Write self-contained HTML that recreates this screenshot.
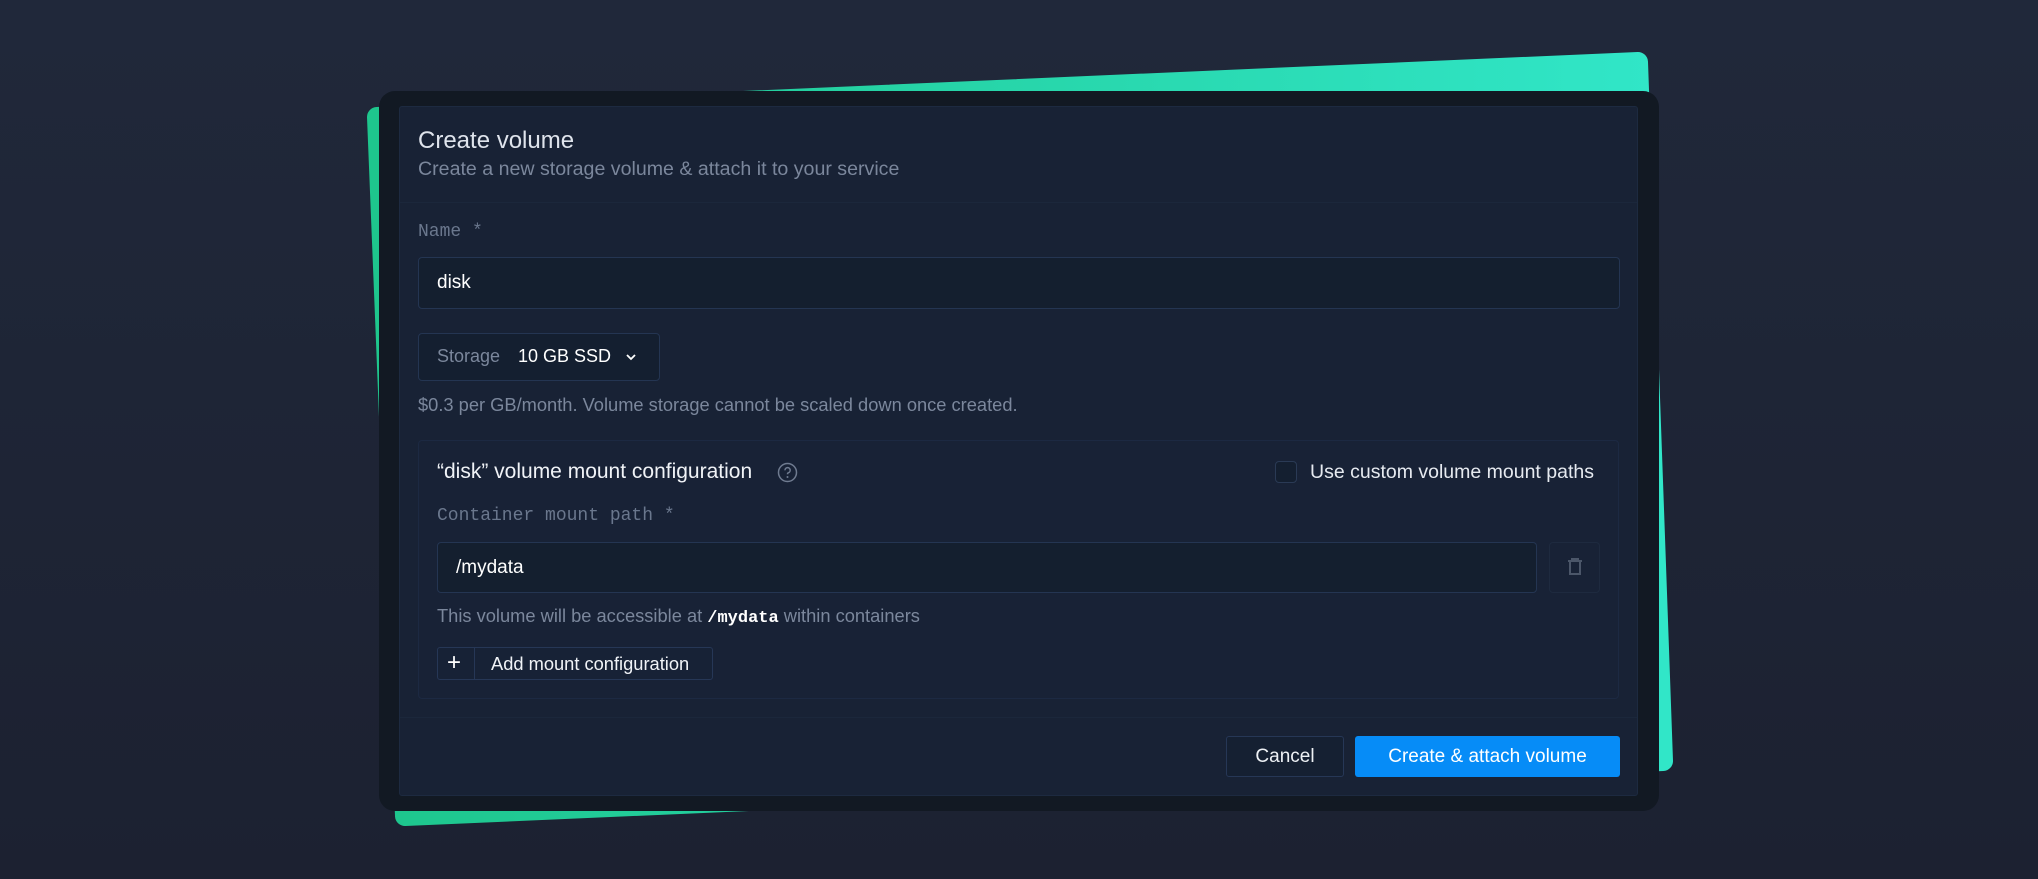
<!DOCTYPE html>
<html><head><meta charset="utf-8"><style>
*{box-sizing:border-box;margin:0;padding:0}
body{width:2038px;height:879px;overflow:hidden;background:linear-gradient(180deg,#20283a 0%,#1c2131 100%);font-family:"Liberation Sans",sans-serif;position:relative}
.abs{position:absolute}
.frame{left:379px;top:91px;width:1280px;height:720px;background:#121923;border-radius:16px}
.panel{left:399px;top:106px;width:1239px;height:690px;background:#182235;border:1px solid #1d2a40;border-radius:3px}
.t{position:absolute;white-space:nowrap}
.mono{font-family:"Liberation Mono",monospace;color:#6a778d;font-size:18px}
.inp{position:absolute;background:#141f2f;border:1.5px solid #243552;border-radius:4px}
</style></head><body>
<svg class="abs" style="left:0;top:0" width="2038" height="879">
<defs><linearGradient id="g" x1="0" y1="0" x2="1" y2="0"><stop offset="0" stop-color="#1ec68d"/><stop offset="1" stop-color="#31e6c8"/></linearGradient></defs>
<polygon points="377,117 1638,62 1663,761 405,816" fill="url(#g)" stroke="url(#g)" stroke-width="20" stroke-linejoin="round"/>
</svg>
<div class="abs frame"></div>
<div class="abs panel"></div>
<div class="abs" style="left:400px;top:202px;width:1237px;height:1px;background:#1b273b"></div>
<div class="abs" style="left:400px;top:717px;width:1237px;height:1px;background:#1b273b"></div>
<div class="t" style="left:418px;top:127px;font-size:24px;color:#dfe4ec">Create volume</div>
<div class="t" style="left:418px;top:158px;font-size:19.6px;color:#7b879c">Create a new storage volume &amp; attach it to your service</div>
<div class="t mono" style="left:418px;top:222px">Name *</div>
<div class="inp" style="left:418px;top:257px;width:1202px;height:52px"></div>
<div class="t" style="left:437px;top:272px;font-size:19px;color:#fff">disk</div>
<div class="inp" style="left:418px;top:333px;width:242px;height:48px;background:#141f30"></div>
<div class="t" style="left:437px;top:346px;font-size:18px;color:#7b879c">Storage</div>
<div class="t" style="left:518px;top:346px;font-size:18px;color:#fff">10 GB SSD</div>
<svg class="abs" style="left:624px;top:352px" width="14" height="10"><path d="M3 3l4 4 4-4" stroke="#fff" stroke-width="1.8" fill="none"/></svg>
<div class="t" style="left:418px;top:394px;font-size:18.3px;color:#7b879c">$0.3 per GB/month. Volume storage cannot be scaled down once created.</div>
<div class="abs" style="left:418px;top:440px;width:1201px;height:259px;border:1px solid #1c2942;border-radius:4px;background:#182236"></div>
<div class="t" style="left:437px;top:460px;font-size:21px;color:#f0f3f7">“disk” volume mount configuration</div>
<svg class="abs" style="left:777px;top:462px" width="21" height="21"><circle cx="10.5" cy="10.5" r="9" stroke="#6f7b90" stroke-width="1.5" fill="none"/><path d="M8 8.3a2.6 2.6 0 1 1 3.4 2.4c-.7.3-.9.7-.9 1.5" stroke="#6f7b90" stroke-width="1.5" fill="none"/><circle cx="10.5" cy="15" r="1" fill="#6f7b90"/></svg>
<div class="abs" style="left:1275px;top:461px;width:22px;height:22px;border:1.5px solid #2a3a55;border-radius:4px;background:#141f30"></div>
<div class="t" style="left:1310px;top:461px;font-size:19.5px;color:#e6eaf0">Use custom volume mount paths</div>
<div class="t mono" style="left:437px;top:506px">Container mount path *</div>
<div class="inp" style="left:437px;top:542px;width:1100px;height:51px"></div>
<div class="t" style="left:456px;top:557px;font-size:19px;color:#fff">/mydata</div>
<div class="abs" style="left:1549px;top:542px;width:51px;height:51px;border:1px solid #1e2a3f;border-radius:4px"></div>
<svg class="abs" style="left:1563px;top:555px" width="24" height="24"><path d="M5 6h14M9 6V4h6v2M7 6v13h10V6" stroke="#4b5669" stroke-width="2" fill="none"/></svg>
<div class="t" style="left:437px;top:605px;font-size:18.3px;color:#7b879c">This volume will be accessible at <span style="font-family:'Liberation Mono',monospace;color:#fff;font-weight:bold;font-size:17px">/mydata</span> within containers</div>
<div class="abs" style="left:437px;top:647px;width:276px;height:33px;border:1px solid #263756;border-radius:3px;background:#172236"></div>
<div class="abs" style="left:474px;top:648px;width:1px;height:31px;background:#263756"></div>
<div class="t" style="left:447px;top:649px;font-size:24px;color:#fff">+</div>
<div class="t" style="left:491px;top:653px;font-size:18.3px;color:#f0f3f7">Add mount configuration</div>
<div class="abs" style="left:1226px;top:736px;width:118px;height:41px;border:1px solid #263756;border-radius:3px;background:#152032"></div>
<div class="t" style="left:1226px;top:746px;width:118px;text-align:center;font-size:19px;color:#eef1f5">Cancel</div>
<div class="abs" style="left:1355px;top:736px;width:265px;height:41px;border-radius:3px;background:#068cf7"></div>
<div class="t" style="left:1355px;top:746px;width:265px;text-align:center;font-size:19px;color:#fff">Create &amp; attach volume</div>
</body></html>
